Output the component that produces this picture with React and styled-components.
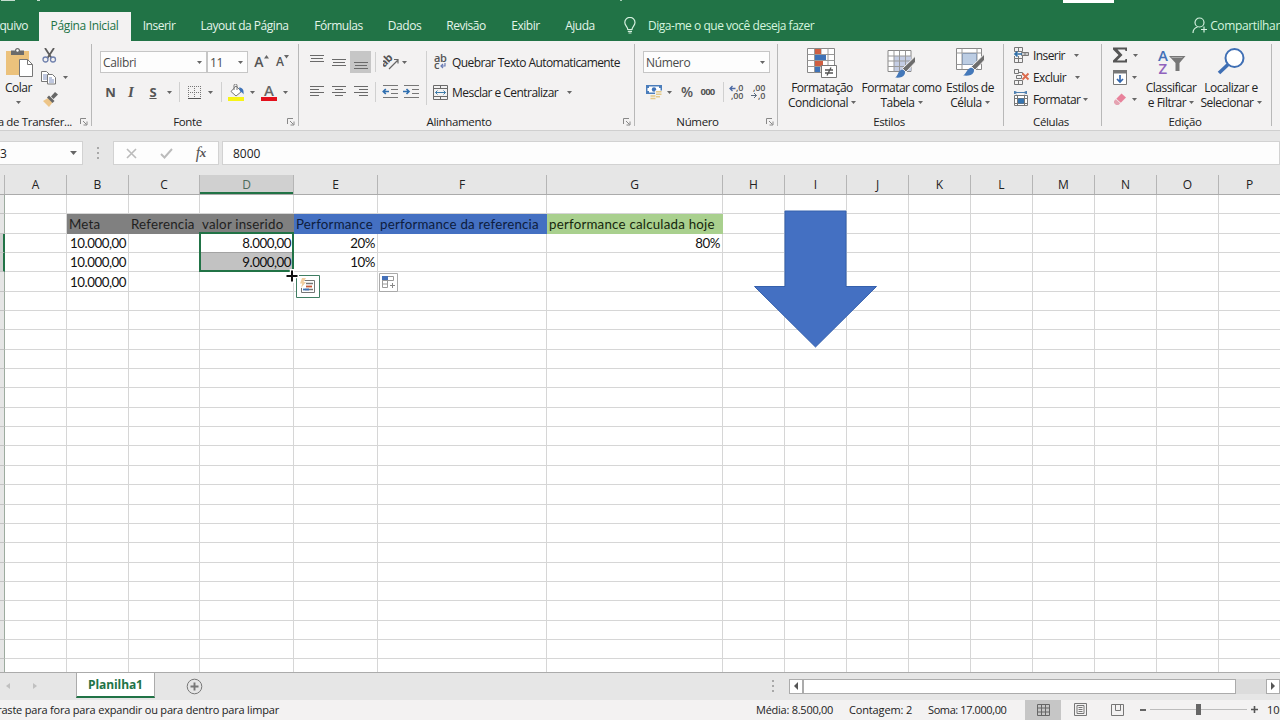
import React from "react";
import styled, { createGlobalStyle } from "styled-components";

const GlobalStyle = createGlobalStyle`
  * {
    box-sizing: border-box;
  }
  body {
    margin: 0;
    overflow: hidden;
    font-family: "Open Sans", "Noto Sans", sans-serif;
    font-size: 12px;
    color: #222;
  }
  svg {
    display: block;
    flex-shrink: 0;
  }
`;

const Window = styled.div`
  width: 1280px;
  height: 720px;
  overflow: hidden;
  display: flex;
  flex-direction: column;
  background-color: #e6e6e6;
`;

/* title bar and tabs */
const TitleBar = styled.div`
  height: 12px;
  flex-shrink: 0;
  background-color: #217346;
  display: flex;
  align-items: flex-start;
`;
const TitleMark = styled.div`
  width: ${(p) => p.$w}px;
  height: ${(p) => p.$h}px;
  margin-left: ${(p) => p.$gap}px;
  background-color: ${(p) => p.$color || "white"};
`;
const TabBar = styled.div`
  height: 29px;
  flex-shrink: 0;
  background-color: #217346;
  display: flex;
`;
const Tab = styled.div`
  width: ${(p) => p.$w}px;
  height: 29px;
  flex-shrink: 0;
  display: flex;
  align-items: center;
  justify-content: ${(p) => (p.$end ? "flex-end" : "center")};
  padding: 0 ${(p) => (p.$end ? 11 : 1)}px 2px 0;
  overflow: hidden;
  white-space: nowrap;
  font-weight: 500;
  letter-spacing: ${(p) => (p.$active ? -0.35 : -0.47)}px;
  color: ${(p) => (p.$active ? "#217346" : "#e4f5ea")};
  background-color: ${(p) => (p.$active ? "#f3f2f2" : "transparent")};
`;
const TellMe = styled.div`
  display: flex;
  align-items: center;
  gap: 12px;
  margin-left: 16px;
  padding-bottom: 2px;
  color: #d5f5df;
  white-space: nowrap;
  font-weight: 500;
  letter-spacing: -0.47px;
`;
const Share = styled(TellMe)`
  gap: 3px;
  margin-left: auto;
  margin-right: 0;
  letter-spacing: -0.35px;
`;

/* ribbon */
const Ribbon = styled.div`
  height: 90px;
  flex-shrink: 0;
  display: flex;
  background-color: #f3f2f2;
  border-bottom: 1px solid #cfcfcf;
`;
const Group = styled.div`
  width: ${(p) => p.$w}px;
  flex-shrink: 0;
  height: 89px;
  display: flex;
  flex-direction: column;
  background: linear-gradient(#b8b8b8, #b8b8b8) right 3px / 1px 82px no-repeat;
`;
const GroupBody = styled.div`
  height: 72px;
  display: flex;
  padding-left: ${(p) => p.$pad || 0}px;
`;
const GroupFooter = styled.div`
  height: 17px;
  display: flex;
  align-items: center;
  padding-right: 4px;
`;
const GroupLabel = styled.div`
  flex: 1;
  display: flex;
  justify-content: ${(p) => (p.$end ? "flex-end" : "center")};
  padding-right: ${(p) => p.$pr ?? 4}px;
  overflow: hidden;
  white-space: nowrap;
  letter-spacing: -0.35px;
  font-size: 11.5px;
`;
const Rows = styled.div`
  display: flex;
  flex-direction: column;
  gap: 8px;
  padding-top: 10px;
`;
const TightRows = styled.div`
  display: flex;
  flex-direction: column;
  padding-top: 3px;
  padding-left: ${(p) => p.$pad || 0}px;
`;
const Row = styled.div`
  height: 22px;
  display: flex;
  align-items: center;
  white-space: nowrap;
`;
const Slot = styled.div`
  width: ${(p) => p.$w}px;
  height: 22px;
  flex-shrink: 0;
  display: flex;
  align-items: center;
  justify-content: center;
  background-color: ${(p) => (p.$on ? "#c6c6c6" : "transparent")};
`;
const Letter = styled.span`
  font-size: ${(p) => p.$size || 13}px;
  font-weight: ${(p) => p.$weight || 700};
  font-style: ${(p) => (p.$italic ? "italic" : "normal")};
  font-family: ${(p) => (p.$italic ? '"Liberation Serif", serif' : "inherit")};
  text-decoration: ${(p) => (p.$under ? "underline" : "none")};
  letter-spacing: ${(p) => p.$ls || 0}px;
  line-height: 16px;
  color: #555;
`;
const Divider = styled.div`
  width: 1px;
  height: ${(p) => p.$h || 20}px;
  margin-top: ${(p) => p.$top || 0}px;
  background-color: #d0d0d0;
`;
const Select = styled.div`
  width: ${(p) => p.$w}px;
  height: 22px;
  display: flex;
  align-items: center;
  justify-content: space-between;
  padding: 0 4px 0 ${(p) => p.$pad ?? 2}px;
  background-color: #fdfdfd;
  border: 1px solid #c6c6c6;
  letter-spacing: -0.35px;
  color: #4a4a4a;
`;
const Label = styled.span`
  margin-left: ${(p) => p.$ml || 0}px;
  margin-right: ${(p) => p.$mr || 0}px;
  letter-spacing: ${(p) => p.$ls ?? -0.58}px;
`;
const BigButton = styled.div`
  width: ${(p) => p.$w}px;
  flex-shrink: 0;
  display: flex;
  flex-direction: column;
  align-items: center;
  padding-top: 6px;
  line-height: 15px;
  white-space: nowrap;
  letter-spacing: -0.5px;
`;
const BigIcon = styled.div`
  height: 32px;
  margin-bottom: 1px;
`;
const BigLine = styled.div`
  height: 15px;
  display: flex;
  align-items: center;
  gap: 3px;
`;

/* formula bar */
const FormulaBar = styled.div`
  height: 44px;
  flex-shrink: 0;
  display: flex;
  align-items: flex-start;
  padding-top: 10px;
  background-color: #e6e6e6;
`;
const Box = styled.div`
  width: ${(p) => (p.$w ? `${p.$w}px` : "auto")};
  flex: ${(p) => (p.$w ? "none" : 1)};
  height: 24px;
  display: flex;
  align-items: center;
  margin-left: ${(p) => p.$ml || 0}px;
  padding-left: ${(p) => p.$pl || 0}px;
  background-color: #fdfdfd;
  border: 1px solid #d2d2d2;
`;
const NameBox = styled(Box)`
  justify-content: space-between;
  padding-right: 5px;
  border-left: none;
`;
const Dots = styled.div`
  width: 2px;
  height: 12px;
  margin: ${(p) => p.$m};
  background: repeating-linear-gradient(#a8a8a8 0 2px, transparent 2px 5px);
`;

/* sheet */
const Sheet = styled.div`
  position: relative;
  height: 497px;
  flex-shrink: 0;
  overflow: hidden;
  background-color: white;
`;
const HeaderRow = styled.div`
  height: 20px;
  display: flex;
  background-color: #e6e6e6;
  border-bottom: 1px solid #ababab;
`;
const ColHeader = styled.div`
  width: ${(p) => p.$w}px;
  height: 19px;
  flex-shrink: 0;
  display: flex;
  align-items: center;
  justify-content: center;
  border-right: 1px solid #b5b5b5;
  box-shadow: ${(p) => (p.$active ? "inset 0 -2px #217346" : "none")};
  background-color: ${(p) => (p.$active ? "#d0d0d0" : "transparent")};
  color: ${(p) => (p.$active ? "#4c6a5a" : "#222")};
`;
const SheetRow = styled.div`
  height: 19.35px;
  display: flex;
`;
const RowHeader = styled.div`
  width: 5px;
  flex-shrink: 0;
  background-color: ${(p) => (p.$active ? "#d0d0d0" : "#e6e6e6")};
  border-right: ${(p) => (p.$active ? "2px solid #217346" : "1px solid #9dab9f")};
  border-bottom: 1px solid #c4c4c4;
`;
const Cell = styled.div`
  width: ${(p) => p.$w}px;
  flex-shrink: 0;
  display: flex;
  align-items: center;
  justify-content: ${(p) => (p.$fill ? "flex-start" : "flex-end")};
  padding: 0 2px 0 2px;
  border-right: 1px solid ${(p) => p.$fill || "#d6d6d6"};
  border-bottom: 1px solid ${(p) => p.$fill || "#d6d6d6"};
  background-color: ${(p) => p.$fill || "transparent"};
  font-family: Lato, sans-serif;
  font-size: 13.3px;
  line-height: 16px;
  letter-spacing: ${(p) => (p.$fill ? 0.22 : -0.46)}px;
  white-space: nowrap;
  color: ${(p) => (p.$fill ? p.$ink : "#111")};
`;
const Selection = styled.div`
  position: absolute;
  left: 199px;
  top: 57px;
  width: 95px;
  height: 40px;
  border: 2px solid #217346;
  background: linear-gradient(transparent 50%, rgba(0, 0, 0, 0.24) 50%);
`;
const Floating = styled.div`
  position: absolute;
  left: ${(p) => p.$x}px;
  top: ${(p) => p.$y}px;
`;

/* bottom */
const SheetTabs = styled.div`
  height: 29px;
  flex-shrink: 0;
  display: flex;
  align-items: center;
  padding-bottom: 2px;
  border-top: 1px solid #ababab;
  background-color: #e6e6e6;
`;
const SheetTab = styled.div`
  width: 79px;
  height: 25px;
  margin: 0 31px 1px 22px;
  display: flex;
  align-items: center;
  justify-content: center;
  background-color: white;
  border: 1px solid #ababab;
  border-top: none;
  border-bottom: 2px solid #217346;
  color: #217346;
  font-weight: 700;
  letter-spacing: -0.1px;
`;
const ScrollButton = styled.div`
  width: 14px;
  height: 15px;
  flex-shrink: 0;
  display: flex;
  align-items: center;
  justify-content: center;
  border: 1px solid #ababab;
  background-color: white;
`;
const ScrollTrack = styled.div`
  width: 463px;
  height: 15px;
  display: flex;
  background-color: #dcdcdc;
`;
const ScrollThumb = styled.div`
  width: 433px;
  height: 15px;
  background-color: white;
  border: 1px solid #ababab;
`;
const StatusBar = styled.div`
  height: 20px;
  flex-shrink: 0;
  display: flex;
  align-items: center;
  margin-top: -1px;
  padding-bottom: 1px;
  background-color: #f3f2f2;
  font-size: 11px;
  white-space: nowrap;
  overflow: hidden;
`;
const Hint = styled.div`
  width: 756px;
  height: 16px;
  display: flex;
  justify-content: flex-end;
  padding-right: 477px;
  letter-spacing: -0.2px;
`;
const Stat = styled.div`
  width: ${(p) => p.$w}px;
  flex-shrink: 0;
  letter-spacing: ${(p) => p.$ls ?? -0.33}px;
`;
const Slider = styled.div`
  width: 97px;
  height: 12px;
  flex-shrink: 0;
  display: flex;
  align-items: center;
  justify-content: center;
  background: linear-gradient(#bcbcbc, #bcbcbc) center / 100% 1px no-repeat;
`;
const Knob = styled.div`
  width: 5px;
  height: 11px;
  background-color: #666;
`;

const Arrow = ({ s = 6, c = "#666" }) => (
  <svg width={s} height={s / 2 + 0.5} viewBox="0 0 6 3.5">
    <path d="M0 0h6L3 3.5z" fill={c} />
  </svg>
);

const Launcher = () => (
  <svg width="8" height="8" viewBox="0 0 8 8" fill="none" stroke="#888">
    <path d="M.5 6V.5H6M3 3l3.5 3.5M7 3.5V7H3.5" />
  </svg>
);

const Lines = ({ rows, w = 14, y = 1, step = 3 }) => (
  <svg width={w} height="14" viewBox={`0 0 ${w} 14`} stroke="#6a6a6a">
    {rows.map(([a, b], i) => (
      <path key={i} d={`M${a} ${y + i * step + 0.5}H${b}`} />
    ))}
  </svg>
);

const Indent = ({ right }) => (
  <svg width="17" height="14" viewBox="0 0 17 14" fill="none">
    <path d="M1 .5h15M9 4.500h7M9 8.500h7M1 12.500h15" stroke="#777" />
    <path
      d={right ? "M0 6.5h6M3.5 4l2.5 2.500L3.500 9" : "M7 6.5H1M3.8 4L1.300 6.500 3.800 9"}
      stroke="#2f6fb0"
      strokeWidth="1.700"
    />
  </svg>
);

const PasteIcon = () => (
  <svg width="28" height="31" viewBox="0 0 28 31">
    <path d="M1 4h23v24H1z" fill="#ecc27c" />
    <path d="M6 3.500h4a2.500 2.500 0 0 1 5 0h4V8H6z" fill="#6b6b6b" />
    <circle cx="12.500" cy="3.500" r="1.200" fill="#fff" />
    <path d="M14.500 12.500h8l5 5v12h-13z" fill="#fff" stroke="#777" />
    <path d="M22.500 12.500v5h5" fill="none" stroke="#777" />
  </svg>
);

const CutIcon = () => (
  <svg width="15" height="15" viewBox="0 0 15 15" fill="none">
    <path d="M3 0l6.500 10M12 0L5.500 10" stroke="#5d5d5d" strokeWidth="1.800" />
    <circle cx="3.500" cy="11.500" r="2.500" stroke="#6f80ad" strokeWidth="1.300" />
    <circle cx="11" cy="11.500" r="2.500" stroke="#6f80ad" strokeWidth="1.300" />
  </svg>
);

const CopyIcon = () => (
  <svg width="16" height="15" viewBox="0 0 16 15" stroke="#777" fill="#fff">
    <path d="M.5 1.500h5l3 3v7h-8z" />
    <path d="M2 5h4M2 7h4M2 9h4" stroke="#7f8fbe" />
    <path d="M6.500 4.500h5l3 3v6.500h-8z" />
    <path d="M8 8h3M8 10h5M8 12h5" stroke="#7f8fbe" />
  </svg>
);

const BrushIcon = () => (
  <svg width="16" height="15" viewBox="0 0 16 15">
    <path d="M1 9l5-3 4.500 4.500L7 15 1 9z" fill="#edc588" />
    <path d="M5 5.500l2-2L12.500 9l-2 2z" fill="#666" />
    <path d="M9 4.500L13 0l3 2.500L11.500 7z" fill="#666" />
  </svg>
);

const BordersIcon = () => (
  <svg width="13" height="13" viewBox="0 0 13 13" fill="none" stroke="#777">
    <path d="M0 .5h13M0 6.500h13M.5 0v13M6.500 0v13M12.500 0v13" strokeDasharray="1 1" />
    <path d="M0 12.500h13" stroke="#555" />
  </svg>
);

const BucketIcon = () => (
  <svg width="17" height="17" viewBox="0 0 17 17">
    <path d="M8 2l5.500 5.500L8 12 3 7.500z" fill="#fff" stroke="#777" />
    <path d="M6 6V1.500a1.500 1.500 0 0 1 3 0V6" fill="none" stroke="#777" />
    <path d="M11 3.500c3.500 0 5 2 4.500 7-1-2-2-2.500-3.500-3z" fill="#3f73b8" />
    <path d="M0 13h16v4H0z" fill="#f7f416" />
  </svg>
);

const FontColorIcon = () => (
  <svg width="16" height="17" viewBox="0 0 16 17">
    <text x="8" y="12" textAnchor="middle" fontSize="15" fontWeight="600" fill="#666">
      A
    </text>
    <path d="M0 13h16v4H0z" fill="#e3101c" />
  </svg>
);

const OrientationIcon = () => (
  <svg width="16" height="16" viewBox="0 0 16 16">
    <text x="-2" y="10" transform="rotate(-45 4 8)" fontSize="11" fontWeight="700" fill="#555" letterSpacing="-.4">
      ab
    </text>
    <path d="M6 15L14.500 6.500M11 5.500h4v4" fill="none" stroke="#666" strokeWidth="1.200" />
  </svg>
);

const WrapIcon = () => (
  <svg width="16" height="18" viewBox="0 0 16 18">
    <text x="2" y="9" fontSize="11" fontWeight="600" fill="#555" letterSpacing="-.5">
      ab
    </text>
    <text x="2" y="16" fontSize="11" fontWeight="600" fill="#555">
      c
    </text>
    <path d="M13 10v3H9.500M11 11l-2 2 2 2" fill="none" stroke="#6a7cb5" strokeWidth="1.200" />
  </svg>
);

const MergeIcon = () => (
  <svg width="15" height="15" viewBox="0 0 15 15" fill="none" stroke="#6a6a6a">
    <path d="M.5.5h14v14H.5zM0 3.500h15M0 11.500h15M7.500.5v3M7.500 11.500v3" />
    <path d="M2.500 7.500h10M4.500 5.500l-2 2 2 2M10.500 5.500l2 2-2 2" stroke="#3d7ba8" />
  </svg>
);

const MoneyIcon = () => (
  <svg width="17" height="17" viewBox="0 0 17 17">
    <path d="M0 1h16v9H0z" fill="#4a7dbb" />
    <path d="M3 2.500h10v1.500h1.500v3H13v1.500H3V7H1.500V4H3z" fill="#fff" />
    <circle cx="8" cy="5.500" r="2.200" fill="#3f73b8" />
    <path d="M9 6.500h8v10H9zM3 10.500h7v6H3z" fill="#f3f2f2" />
    <path d="M10 7.800h5.500M10 10.300h5.500M10 12.800h4M4.500 12h5M4.500 14.500h5" stroke="#e4c989" strokeWidth="1.600" />
  </svg>
);

const DecimalIcon = ({ less }) => (
  <svg width="16" height="16" viewBox="0 0 16 16" fontSize="9" fontWeight="600" letterSpacing="-.2">
    <text x={less ? 2 : 7} y="7" fill="#555">
      {less ? ",00" : ",0"}
    </text>
    <text x={less ? 7 : 2} y="15" fill="#555">
      {less ? ",0" : ",00"}
    </text>
    {less ? (
      <path d="M0 11.500h5.500M3 9l2.500 2.500L3 14" fill="none" stroke="#5b6a7c" />
    ) : (
      <path d="M6.500 4.500H1M3.500 2L1 4.500 3.500 7" fill="none" stroke="#4b6aa4" strokeWidth="1.300" />
    )}
  </svg>
);

const CondIcon = () => (
  <svg width="30" height="32" viewBox="0 0 30 32">
    <path d="M.5 1.500h27v24H.5z" fill="#fff" stroke="#888" />
    <path d="M.5 7.500h27M.5 13.500h27M.5 19.500h27M7.500 1.500v24M14 1.500v24M21 1.500v24" stroke="#999" />
    <path d="M8 2h6v5H8zM8 14h8v5H8z" fill="#cf5f42" />
    <path d="M8 8h11v5H8zM8 20h5v5H8z" fill="#3f73b8" />
    <path d="M14.500 18.500h15v12h-15z" fill="#fff" stroke="#777" />
    <path d="M18 23h8M18 26h8M24 20.500l-4 8" stroke="#555" strokeWidth="1.300" />
  </svg>
);

const TableIcon = () => (
  <svg width="29" height="32" viewBox="0 0 29 32">
    <path d="M1 3.500h23v21H1z" fill="#fff" stroke="#888" />
    <path d="M7 9h17v15H7z" fill="#c4cde4" />
    <path d="M1 9h23M1 14h23M1 19.500h23M7 3.500v21M12.500 3.500v21M18.500 3.500v21" stroke="#999" />
    <path d="M28.500 9v6L19 25l-3.500-3.500z" fill="#6d6d6d" stroke="#f3f2f2" />
    <path d="M8 30.500c3-1 2.500-6 6-7.500 3-1 5 2 3.500 4.500C16 30.500 12 31 8 30.500z" fill="#4478b9" />
  </svg>
);

const StyleIcon = () => (
  <svg width="29" height="32" viewBox="0 0 29 32">
    <path d="M.5 1.500h25v21H.5z" fill="#fff" stroke="#888" />
    <path d="M6 1.500v21M21 1.500v21M.5 6h25M.5 17.500h25" stroke="#999" />
    <path d="M6.500 6.500h14v11h-14z" fill="#bccde3" stroke="#8c9db5" />
    <path d="M28.500 7v6L19 23l-3.500-3.500z" fill="#6d6d6d" stroke="#f3f2f2" />
    <path d="M7 28.500c3-1 3.500-6 7-7.500 3-1 5 2 3.500 4.500C16 28.500 12 29 7 28.500z" fill="#4478b9" />
  </svg>
);

const InsertIcon = () => (
  <svg width="17" height="16" viewBox="0 0 17 16" fill="none" stroke="#777">
    <path d="M1.500.5h8v4h-8zM5.500.5v4M1.500 11.500h8v4h-8zM5.500 9v6.500M1.500 9v2.500M9.500 9v2.500" />
    <path d="M8.500 5.500h7v3h-7zM12 5.500v3" fill="#ccc" />
    <path d="M9 7H1.500M4.500 4.500L2 7l2.500 2.500" stroke="#2f6fa8" strokeWidth="1.700" />
  </svg>
);

const DeleteIcon = () => (
  <svg width="17" height="16" viewBox="0 0 17 16" fill="none" stroke="#777">
    <path d="M1.500.5h4v4h-4zM5.500 3.500h4v2M1.500 11.500h8v4h-8zM5.500 11.500v4M3.500 6.500h5v3h-5z" />
    <path d="M9.500 4.500l6 6M15.500 4.500l-6 6" stroke="#dd6b4d" strokeWidth="1.900" />
  </svg>
);

const FormatIcon = () => (
  <svg width="17" height="16" viewBox="0 0 17 16" fill="none" stroke="#777">
    <path d="M1.500 1.500h12M3.500 0l-2 1.500 2 1.500M11.500 0l2 1.500-2 1.500M1.500 0v3M13.500 0v3" stroke="#4d7fb0" />
    <path d="M1.500 4.500h13v10h-13zM1.500 7.500h13M1.500 12.500h13M4.500 4.500v10M11.500 4.500v10" fill="#fff" />
    <path d="M5.500 8h5v4h-5z" fill="#3775b0" stroke="#3775b0" />
  </svg>
);

const SumIcon = () => (
  <svg width="16" height="16" viewBox="0 0 16 16">
    <path d="M1 .5h14v3.500h-1.500l-.5-1.500H5.500l5 5.500L5 13.500h8l.5-1.500H15v3.500H1v-2l5.500-5.500L1 2.500z" fill="#555" />
  </svg>
);

const FillIcon = () => (
  <svg width="14" height="15" viewBox="0 0 14 15" fill="none">
    <path d="M.5 1h13v13.500H.5z" fill="#fff" stroke="#777" />
    <path d="M0 0h14v3.500H0z" fill="#777" />
    <path d="M7 5v7M4 9l3 3 3-3" stroke="#3467ad" strokeWidth="1.700" />
  </svg>
);

const EraserIcon = () => (
  <svg width="14" height="13" viewBox="0 0 14 13">
    <path d="M8.500.5L13 4.500 7.800 9.700l-4.500-4z" fill="#e8829b" />
    <path d="M2.700 6.300l4.500 4L5.500 12H3L1 10V8z" fill="#e5a3b2" />
  </svg>
);

const SortIcon = () => (
  <svg width="29" height="32" viewBox="0 0 29 32" fontSize="15" fontWeight="600">
    <text x="1" y="13.500" fill="#4470b8">
      A
    </text>
    <text x="1.500" y="27" fill="#9062bd">
      Z
    </text>
    <path d="M12 9h16.500l-6 7v8h-4v-8z" fill="#777" />
    <path d="M14.500 10.500h11" stroke="#aaa" />
  </svg>
);

const FindIcon = () => (
  <svg width="28" height="32" viewBox="0 0 28 32" fill="none" stroke="#3f6fb4">
    <circle cx="17.500" cy="11" r="9" fill="#fff" strokeWidth="2" />
    <path d="M11 17.500l-9 8.500" strokeWidth="3.600" />
  </svg>
);

const BulbIcon = () => (
  <svg width="12" height="17" viewBox="0 0 12 17" fill="none" stroke="#d5f0df" strokeWidth="1.200">
    <path d="M3.800 12.500c0-2.500-3-4-3-7a5 5 0 0 1 10.200 0c0 3-3 4.500-3 7zM3.800 14.300H8M4.500 16h3" />
  </svg>
);

const PersonIcon = () => (
  <svg width="15" height="17" viewBox="0 0 15 17" fill="none" stroke="#d5f0df" strokeWidth="1.200">
    <circle cx="7.500" cy="5.500" r="4.500" />
    <path d="M1 16c0-3.500 1.500-5 4.500-6M9 12.500h6M12 9.500v6" />
  </svg>
);

const columns = [
  ["A", 62], ["B", 62], ["C", 71], ["D", 94], ["E", 84], ["F", 169], ["G", 176],
  ["H", 62], ["I", 62], ["J", 62], ["K", 62], ["L", 62], ["M", 62], ["N", 62], ["O", 62], ["P", 62],
];

const gray = { fill: "#808080", ink: "#1f1f1f" };
const blue = { fill: "#4470c2", ink: "#0d1c3d" };
const green = { fill: "#a9d08e", ink: "#16270c" };

const cells = {
  B2: { text: "Meta", ...gray },
  C2: { text: "Referencia", ...gray },
  D2: { text: "valor inserido", ...gray },
  E2: { text: "Performance", ...blue },
  F2: { text: "performance da referencia", ...blue },
  G2: { text: "performance calculada hoje", ...green },
  B3: { text: "10.000,00" },
  B4: { text: "10.000,00" },
  B5: { text: "10.000,00" },
  D3: { text: "8.000,00" },
  D4: { text: "9.000,00" },
  E3: { text: "20%" },
  E4: { text: "10%" },
  G3: { text: "80%" },
};

const tabs = [
  ["Arquivo", 39], ["Página Inicial", 92], ["Inserir", 57], ["Layout da Página", 114],
  ["Fórmulas", 74], ["Dados", 58], ["Revisão", 65], ["Exibir", 54], ["Ajuda", 55],
];

const full = [[0, 14], [1, 13], [0, 14]];
const left = [[0, 14], [0, 9], [0, 14], [0, 9]];
const center = [[0, 14], [3, 11], [0, 14], [3, 11]];
const right = [[0, 14], [5, 14], [0, 14], [5, 14]];

const Header = () => (
  <>
    <TitleBar>
      <TitleMark $w={14} $h={1} $gap={1} $color="#c5ddcf" />
      <TitleMark $w={3} $h={1} $gap={22} $color="#c5ddcf" />
      <TitleMark $w={2} $h={1} $gap={580} $color="#a5cdb5" />
      <TitleMark $w={51} $h={3} $gap={441} />
    </TitleBar>
    <TabBar>
      {tabs.map(([name, w], i) => (
        <Tab key={name} $w={w} $end={i === 0} $active={i === 1}>
          {name}
        </Tab>
      ))}
      <TellMe>
        <BulbIcon />
        Diga-me o que você deseja fazer
      </TellMe>
      <Share>
        <PersonIcon />
        Compartilhar
      </Share>
    </TabBar>
  </>
);

const ClipboardGroup = () => (
  <Group $w={92}>
    <GroupBody>
      <BigButton $w={37}>
        <BigIcon>
          <PasteIcon />
        </BigIcon>
        <BigLine>Colar</BigLine>
        <BigLine>
          <Arrow s={5} />
        </BigLine>
      </BigButton>
      <TightRows $pad={3}>
        <Row>
          <Slot $w={18}><CutIcon /></Slot>
        </Row>
        <Row>
          <Slot $w={18}><CopyIcon /></Slot>
          <Slot $w={14}><Arrow s={5} /></Slot>
        </Row>
        <Row>
          <Slot $w={20}><BrushIcon /></Slot>
        </Row>
      </TightRows>
    </GroupBody>
    <GroupFooter>
      <GroupLabel $end $pr={8}>Área de Transfer...</GroupLabel>
      <Launcher />
    </GroupFooter>
  </Group>
);

const FontGroup = () => (
  <Group $w={207}>
    <GroupBody $pad={8}>
      <Rows>
        <Row>
          <Select $w={107}>Calibri<Arrow s={5} /></Select>
          <Select $w={41} $pad={2}>11<Arrow s={5} /></Select>
          <Slot $w={27}>
            <Letter $size={14} $weight={600}>A</Letter>
            <Row><svg width="5" height="14"><path d="M0 3.500L2.500 0 5 3.500z" fill="#666" /></svg></Row>
          </Slot>
          <Slot $w={15}>
            <Letter $size={12} $weight={600}>A</Letter>
            <Row><svg width="5" height="14"><path d="M0 0h5L2.500 3.500z" fill="#666" /></svg></Row>
          </Slot>
        </Row>
        <Row>
          <Slot $w={21}><Letter>N</Letter></Slot>
          <Slot $w={20}><Letter $italic $size={15}>I</Letter></Slot>
          <Slot $w={24}><Letter $under>S</Letter></Slot>
          <Slot $w={8}><Arrow s={5} /></Slot>
          <Slot $w={12}><Divider /></Slot>
          <Slot $w={19}><BordersIcon /></Slot>
          <Slot $w={12}><Arrow s={5} /></Slot>
          <Slot $w={10}><Divider /></Slot>
          <Slot $w={20}><BucketIcon /></Slot>
          <Slot $w={12}><Arrow s={5} /></Slot>
          <Slot $w={22}><FontColorIcon /></Slot>
          <Slot $w={10}><Arrow s={5} /></Slot>
        </Row>
      </Rows>
    </GroupBody>
    <GroupFooter>
      <GroupLabel>Fonte</GroupLabel>
      <Launcher />
    </GroupFooter>
  </Group>
);

const AlignGroup = () => (
  <Group $w={336}>
    <GroupBody $pad={8}>
      <Rows>
        <Row>
          <Slot $w={20}><Lines rows={full} y={0} step={3} /></Slot>
          <Slot $w={23}><Lines rows={full} y={4} step={3} /></Slot>
          <Slot $w={21} $on><Lines rows={full} y={7} /></Slot>
          <Slot $w={9}><Divider /></Slot>
          <Slot $w={21}><OrientationIcon /></Slot>
          <Slot $w={6}><Arrow s={5} /></Slot>
        </Row>
        <Row>
          <Slot $w={20}><Lines rows={left} /></Slot>
          <Slot $w={23}><Lines rows={center} /></Slot>
          <Slot $w={21}><Lines rows={right} /></Slot>
          <Slot $w={9}><Divider /></Slot>
          <Slot $w={20}><Indent /></Slot>
          <Slot $w={22}><Indent right /></Slot>
          <Slot $w={4} />
        </Row>
      </Rows>
      <Divider $h={54} $top={10} />
      <Rows>
        <Row>
          <Slot $w={25}><WrapIcon /></Slot>
          <Label>Quebrar Texto Automaticamente</Label>
        </Row>
        <Row>
          <Slot $w={27}><MergeIcon /></Slot>
          <Label $ml={-2} $mr={9} $ls={-0.53}>Mesclar e Centralizar</Label>
          <Arrow s={5} />
        </Row>
      </Rows>
    </GroupBody>
    <GroupFooter>
      <GroupLabel>Alinhamento</GroupLabel>
      <Launcher />
    </GroupFooter>
  </Group>
);

const NumberGroup = () => (
  <Group $w={143}>
    <GroupBody $pad={8}>
      <Rows>
        <Row>
          <Select $w={127}>Número<Arrow s={5} /></Select>
        </Row>
        <Row>
          <Slot $w={22}><MoneyIcon /></Slot>
          <Slot $w={8}><Arrow s={5} /></Slot>
          <Slot $w={28}><Letter $size={14} $weight={600}>%</Letter></Slot>
          <Slot $w={13}><Letter $size={9.5} $weight={700} $ls={-0.7}>000</Letter></Slot>
          <Slot $w={18}><Divider /></Slot>
          <Slot $w={10}><DecimalIcon /></Slot>
          <Slot $w={33}><DecimalIcon less /></Slot>
        </Row>
      </Rows>
    </GroupBody>
    <GroupFooter>
      <GroupLabel $pr={6}>Número</GroupLabel>
      <Launcher />
    </GroupFooter>
  </Group>
);

const StylesGroup = () => (
  <Group $w={226}>
    <GroupBody>
      <BigButton $w={88}>
        <BigIcon><CondIcon /></BigIcon>
        <BigLine>Formatação</BigLine>
        <BigLine>Condicional<Arrow s={5} /></BigLine>
      </BigButton>
      <BigButton $w={71}>
        <BigIcon><TableIcon /></BigIcon>
        <BigLine>Formatar como</BigLine>
        <BigLine>Tabela<Arrow s={5} /></BigLine>
      </BigButton>
      <BigButton $w={66}>
        <BigIcon><StyleIcon /></BigIcon>
        <BigLine>Estilos de</BigLine>
        <BigLine>Célula<Arrow s={5} /></BigLine>
      </BigButton>
    </GroupBody>
    <GroupFooter>
      <GroupLabel $pr={0}>Estilos</GroupLabel>
    </GroupFooter>
  </Group>
);

const CellsGroup = () => (
  <Group $w={98}>
    <GroupBody>
      <TightRows $pad={9}>
        <Row><InsertIcon /><Label $ml={3} $mr={9}>Inserir</Label><Arrow s={5} /></Row>
        <Row><DeleteIcon /><Label $ml={3} $mr={9}>Excluir</Label><Arrow s={5} /></Row>
        <Row><FormatIcon /><Label $ml={3} $mr={3}>Formatar</Label><Arrow s={5} /></Row>
      </TightRows>
    </GroupBody>
    <GroupFooter>
      <GroupLabel $pr={0}>Células</GroupLabel>
    </GroupFooter>
  </Group>
);

const EditingGroup = () => (
  <Group $w={170}>
    <GroupBody>
      <TightRows $pad={8}>
        <Row><Slot $w={20}><SumIcon /></Slot><Slot $w={10}><Arrow s={5} /></Slot></Row>
        <Row><Slot $w={20}><FillIcon /></Slot><Slot $w={8}><Arrow s={5} /></Slot></Row>
        <Row><Slot $w={20}><EraserIcon /></Slot><Slot $w={8}><Arrow s={5} /></Slot></Row>
      </TightRows>
      <BigButton $w={62}>
        <BigIcon><SortIcon /></BigIcon>
        <BigLine>Classificar</BigLine>
        <BigLine>e Filtrar<Arrow s={5} /></BigLine>
      </BigButton>
      <BigButton $w={58}>
        <BigIcon><FindIcon /></BigIcon>
        <BigLine>Localizar e</BigLine>
        <BigLine>Selecionar<Arrow s={5} /></BigLine>
      </BigButton>
    </GroupBody>
    <GroupFooter>
      <GroupLabel $pr={0}>Edição</GroupLabel>
    </GroupFooter>
  </Group>
);

const Formula = () => (
  <FormulaBar>
    <NameBox $w={83}>
      <span>3</span>
      <Arrow s={7} />
    </NameBox>
    <Dots $m="6px 14px 0 14px" />
    <Box $w={106}>
      <Slot $w={34}>
        <svg width="11" height="11" stroke="#bbb" strokeWidth="1.600"><path d="M1 1l9 9M10 1l-9 9" /></svg>
      </Slot>
      <Slot $w={36}>
        <svg width="13" height="11" fill="none" stroke="#bbb" strokeWidth="1.900"><path d="M1 6l3.500 3.500L12 1" /></svg>
      </Slot>
      <Slot $w={34}>
        <Letter $italic $size={16} $weight={400} $ls={-0.5}>f</Letter>
        <Letter $italic $size={13} $weight={700}>x</Letter>
      </Slot>
    </Box>
    <Box $ml={3} $pl={10}>8000</Box>
  </FormulaBar>
);

const Grid = () => (
  <Sheet>
    <HeaderRow>
      <ColHeader $w={5} />
      {columns.map(([name, w]) => (
        <ColHeader key={name} $w={w} $active={name === "D"}>
          {name}
        </ColHeader>
      ))}
    </HeaderRow>
    {Array.from({ length: 25 }, (_, i) => i + 1).map((row) => (
      <SheetRow key={row}>
        <RowHeader $active={row === 3 || row === 4} />
        {columns.map(([name, w]) => {
          const cell = cells[name + row] || {};
          return (
            <Cell key={name} $w={w} $fill={cell.fill} $ink={cell.ink}>
              {cell.text}
            </Cell>
          );
        })}
      </SheetRow>
    ))}
    <Selection />
    <Floating $x={753} $y={35}>
      <svg width="125" height="138" viewBox="0 0 125 138">
        <path d="M32 1h61v75.500h30.500L62.500 137 1.500 76.500H32z" fill="#4470c2" stroke="#3560ac" />
      </svg>
    </Floating>
    <Floating $x={296} $y={100}>
      <svg width="24" height="23" viewBox="0 0 24 23">
        <path d="M.5.5h23v22H.5z" fill="#fff" stroke="#3f7d62" />
        <path d="M8.500 5.500h10v12h-13V13" fill="#fff" stroke="#777" />
        <path d="M10 8.500h7M9 14.500h8" stroke="#777" strokeWidth="1.500" />
        <path d="M10 11.500h6" stroke="#c85a3a" strokeWidth="1.800" />
        <path d="M7 14.500h6" stroke="#3f73b8" strokeWidth="1.800" />
        <path d="M6 3h4L7.500 7H10l-5 6 1.200-4.500H4z" fill="#f0cda0" />
      </svg>
    </Floating>
    <Floating $x={379} $y={98}>
      <svg width="19" height="19" viewBox="0 0 19 19">
        <path d="M.5.5h18v18H.5z" fill="#fff" stroke="#aaa" />
        <path d="M3.500 3.500h11v4h-11zM3.500 7.500h5v7h-5zM3.500 11h5" fill="#fff" stroke="#999" />
        <path d="M3 3h6v4H3z" fill="#4470b8" />
        <path d="M11 12.500h5M13.500 10v5" stroke="#888" />
      </svg>
    </Floating>
    <Floating $x={285} $y={94}>
      <svg width="14" height="14" viewBox="0 0 14 14">
        <path d="M7 0v14M0 7h14" stroke="#fff" strokeWidth="4.500" />
        <path d="M7 1.500v11M1.500 7h11" stroke="#111" strokeWidth="2" />
      </svg>
    </Floating>
  </Sheet>
);

const Footer = () => (
  <>
    <SheetTabs>
      <Slot $w={16}><svg width="4" height="6"><path d="M4 0v6L0 3z" fill="#c0c0c0" /></svg></Slot>
      <Slot $w={38}><svg width="4" height="6"><path d="M0 0v6l4-3z" fill="#c0c0c0" /></svg></Slot>
      <SheetTab>Planilha1</SheetTab>
      <svg width="17" height="17" viewBox="0 0 17 17" fill="none" stroke="#777">
        <circle cx="8.500" cy="8.500" r="7.300" />
        <path d="M4.500 8.500h8M8.500 4.500v8" strokeWidth="1.900" />
      </svg>
      <Dots $m="0 15px 0 auto" />
      <ScrollButton><svg width="4" height="8"><path d="M4 0v8L0 4z" fill="#555" /></svg></ScrollButton>
      <ScrollTrack><ScrollThumb /></ScrollTrack>
      <ScrollButton><svg width="4" height="8"><path d="M0 0v8l4-4z" fill="#555" /></svg></ScrollButton>
    </SheetTabs>
    <StatusBar>
      <Hint>Arraste para fora para expandir ou para dentro para limpar</Hint>
      <Stat $w={93} $ls={-0.25}>Média: 8.500,00</Stat>
      <Stat $w={79} $ls={-0.15}>Contagem: 2</Stat>
      <Stat $w={97} $ls={-0.4}>Soma: 17.000,00</Stat>
      <Slot $w={36} $on>
        <svg width="13" height="12" fill="none" stroke="#666"><path d="M.5.5h12v11H.5zM.5 4h12M.5 8h12M4.500.5v11M8.500.5v11" /></svg>
      </Slot>
      <Slot $w={38}>
        <svg width="13" height="13" fill="none" stroke="#777"><path d="M.5.5h12v12H.5zM3 2.500h7v8H3zM4.500 4.500h4M4.500 6.500h4M4.500 8.500h4" /></svg>
      </Slot>
      <Slot $w={36}>
        <svg width="13" height="12" fill="none" stroke="#777"><path d="M.5.5h12v11H.5zM4.500.5v6h5v-6" /></svg>
      </Slot>
      <Slot $w={15}><svg width="6" height="2"><path d="M0 0h6v2H0z" fill="#666" /></svg></Slot>
      <Slider><Knob /></Slider>
      <Slot $w={14}><svg width="7" height="7" stroke="#555" strokeWidth="1.600"><path d="M0 3.500h7M3.500 0v7" /></svg></Slot>
      <Slot $w={6} />
      <Stat $w={30} $ls={0}>100%</Stat>
    </StatusBar>
  </>
);

const App = () => {
  return (
    <Window>
      <GlobalStyle />
      <Header />
      <Ribbon>
        <ClipboardGroup />
        <FontGroup />
        <AlignGroup />
        <NumberGroup />
        <StylesGroup />
        <CellsGroup />
        <EditingGroup />
      </Ribbon>
      <Formula />
      <Grid />
      <Footer />
    </Window>
  );
};

export default App;
